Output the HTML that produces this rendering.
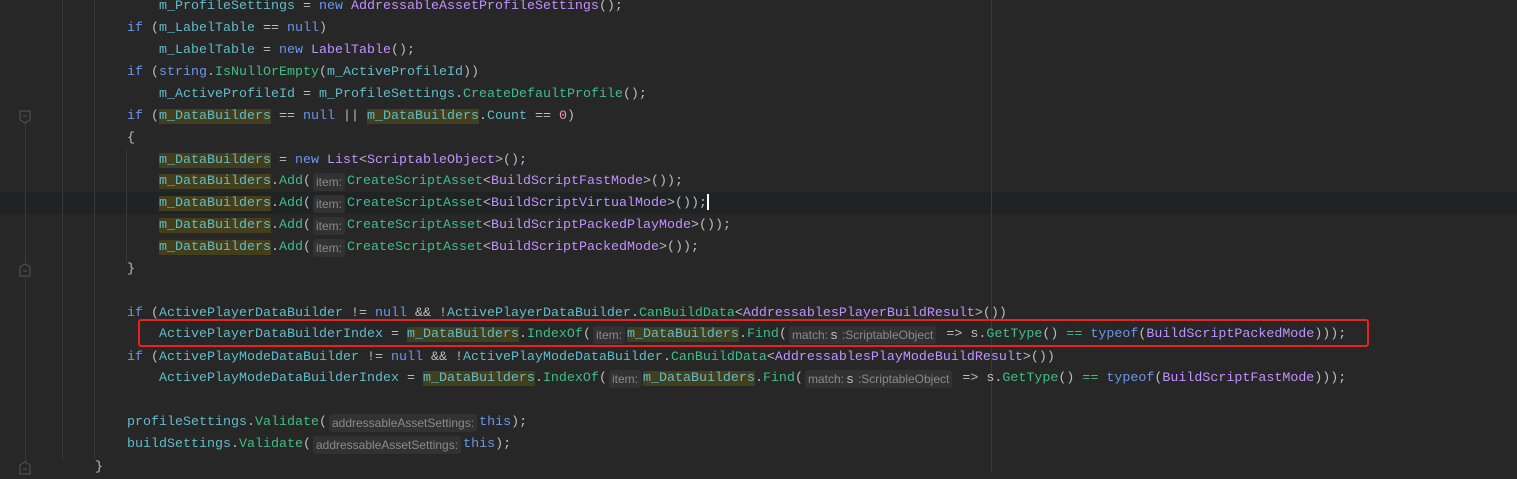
<!DOCTYPE html>
<html><head><meta charset="utf-8"><style>
body{margin:0;width:1517px;height:472px;background:#272727;overflow:hidden;position:relative;font-family:"Liberation Mono",monospace;font-size:13.33px;color:#bdbdbd}
#w{position:absolute;left:0;top:3px;width:1517px;height:472px}
.l{position:absolute;left:0;height:22px;line-height:22px;white-space:pre;}
.f{color:#62bcc8}.m{color:#3cbf88}.k{color:#6c95eb}.c{color:#c191ff}.n{color:#ed94c0}
.h{background:#433f1c}
.i{display:inline-block;height:18px;line-height:18px;vertical-align:top;margin-top:2px;font-family:"Liberation Sans",sans-serif;font-size:12px;color:#8a8a8a;background:#323232;border-radius:3px;padding:0 3px;margin-left:2px;margin-right:2px}
.i b{font-weight:normal;color:#bdbdbd;font-family:"Liberation Mono",monospace;font-size:13.33px;margin:0 4px 0 2px}
.v{position:absolute;width:1px;background:#393939}
</style></head><body>
<div style="position:absolute;left:0;top:192px;width:1517px;height:22px;background:#1f2324"></div>
<div class="v" style="left:991px;top:0;height:472px;background:#3a3a3a"></div>
<div class="v" style="left:62px;top:0;height:460px"></div>
<div class="v" style="left:94px;top:0;height:460px"></div>
<div class="v" style="left:25px;top:122px;height:142px"></div>
<div class="v" style="left:25px;top:277px;height:185px"></div>
<div class="v" style="left:126px;top:150px;height:112px"></div>
<svg style="position:absolute;left:19px;top:110px" width="12" height="14"><path d="M1 1H11V10L6 13L1 10Z" fill="none" stroke="#555"/><path d="M4 6H8" stroke="#555"/></svg>
<svg style="position:absolute;left:19px;top:263px" width="12" height="14"><path d="M1 13H11V4L6 1L1 4Z" fill="none" stroke="#555"/><path d="M4 8H8" stroke="#555"/></svg>
<svg style="position:absolute;left:19px;top:461px" width="12" height="14"><path d="M1 13H11V4L6 1L1 4Z" fill="none" stroke="#555"/><path d="M4 8H8" stroke="#555"/></svg>
<div id="w">
<div class="l" style="top:-7px;left:159px"><span class="f">m_ProfileSettings</span> = <span class="k">new</span> <span class="c">AddressableAssetProfileSettings</span>();</div>
<div class="l" style="top:15px;left:127px"><span class="k">if</span> (<span class="f">m_LabelTable</span> == <span class="k">null</span>)</div>
<div class="l" style="top:37px;left:159px"><span class="f">m_LabelTable</span> = <span class="k">new</span> <span class="c">LabelTable</span>();</div>
<div class="l" style="top:59px;left:127px"><span class="k">if</span> (<span class="k">string</span>.<span class="m">IsNullOrEmpty</span>(<span class="f">m_ActiveProfileId</span>))</div>
<div class="l" style="top:81px;left:159px"><span class="f">m_ActiveProfileId</span> = <span class="f">m_ProfileSettings</span>.<span class="m">CreateDefaultProfile</span>();</div>
<div class="l" style="top:103px;left:127px"><span class="k">if</span> (<span class="f h">m_DataBuilders</span> == <span class="k">null</span> || <span class="f h">m_DataBuilders</span>.<span class="f">Count</span> == <span class="n">0</span>)</div>
<div class="l" style="top:125px;left:127px">{</div>
<div class="l" style="top:147px;left:159px"><span class="f h">m_DataBuilders</span> = <span class="k">new</span> <span class="c">List</span>&lt;<span class="c">ScriptableObject</span>&gt;();</div>
<div class="l" style="top:168px;left:159px"><span class="f h">m_DataBuilders</span>.<span class="m">Add</span>(<span class="i">item:</span><span class="m">CreateScriptAsset</span>&lt;<span class="c">BuildScriptFastMode</span>&gt;());</div>
<div class="l" style="top:190px;left:159px"><span class="f h">m_DataBuilders</span>.<span class="m">Add</span>(<span class="i">item:</span><span class="m">CreateScriptAsset</span>&lt;<span class="c">BuildScriptVirtualMode</span>&gt;());<span style="display:inline-block;width:2px;height:16px;background:#fff;vertical-align:middle"></span></div>
<div class="l" style="top:212px;left:159px"><span class="f h">m_DataBuilders</span>.<span class="m">Add</span>(<span class="i">item:</span><span class="m">CreateScriptAsset</span>&lt;<span class="c">BuildScriptPackedPlayMode</span>&gt;());</div>
<div class="l" style="top:234px;left:159px"><span class="f h">m_DataBuilders</span>.<span class="m">Add</span>(<span class="i">item:</span><span class="m">CreateScriptAsset</span>&lt;<span class="c">BuildScriptPackedMode</span>&gt;());</div>
<div class="l" style="top:256px;left:127px">}</div>
<div class="l" style="top:300px;left:127px"><span class="k">if</span> (<span class="f">ActivePlayerDataBuilder</span> != <span class="k">null</span> &amp;&amp; !<span class="f">ActivePlayerDataBuilder</span>.<span class="m">CanBuildData</span>&lt;<span class="c">AddressablesPlayerBuildResult</span>&gt;())</div>
<div class="l" style="top:321px;left:159px"><span class="f">ActivePlayerDataBuilderIndex</span> = <span class="f h">m_DataBuilders</span>.<span class="m">IndexOf</span>(<span class="i">item:</span><span class="f h">m_DataBuilders</span>.<span class="m">Find</span>(<span class="i">match:<b>s</b>:ScriptableObject</span> =&gt; s.<span class="m">GetType</span>() <span class="m">==</span> <span class="k">typeof</span>(<span class="c">BuildScriptPackedMode</span>)));</div>
<div class="l" style="top:344px;left:127px"><span class="k">if</span> (<span class="f">ActivePlayModeDataBuilder</span> != <span class="k">null</span> &amp;&amp; !<span class="f">ActivePlayModeDataBuilder</span>.<span class="m">CanBuildData</span>&lt;<span class="c">AddressablesPlayModeBuildResult</span>&gt;())</div>
<div class="l" style="top:365px;left:159px"><span class="f">ActivePlayModeDataBuilderIndex</span> = <span class="f h">m_DataBuilders</span>.<span class="m">IndexOf</span>(<span class="i">item:</span><span class="f h">m_DataBuilders</span>.<span class="m">Find</span>(<span class="i">match:<b>s</b>:ScriptableObject</span> =&gt; s.<span class="m">GetType</span>() <span class="m">==</span> <span class="k">typeof</span>(<span class="c">BuildScriptFastMode</span>)));</div>
<div class="l" style="top:409px;left:127px"><span class="f">profileSettings</span>.<span class="m">Validate</span>(<span class="i">addressableAssetSettings:</span><span class="k">this</span>);</div>
<div class="l" style="top:431px;left:127px"><span class="f">buildSettings</span>.<span class="m">Validate</span>(<span class="i">addressableAssetSettings:</span><span class="k">this</span>);</div>
<div class="l" style="top:454px;left:95px">}</div>
</div>
<div style="position:absolute;left:138px;top:319px;width:1227px;height:24px;border:2px solid #e8231d;border-radius:3px"></div>
</body></html>
